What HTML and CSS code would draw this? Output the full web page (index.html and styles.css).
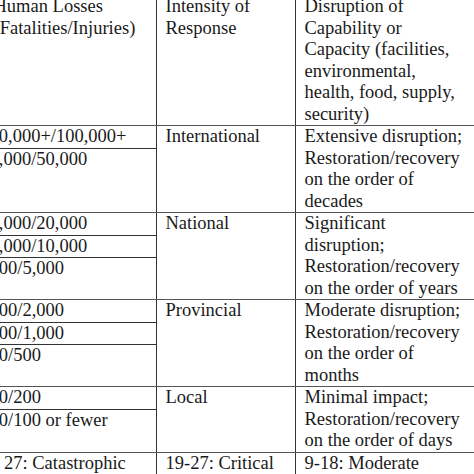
FILE: index.html
```html
<!DOCTYPE html>
<html>
<head>
<meta charset="utf-8">
<link rel="stylesheet" href="styles.css">
</head>
<body>
<div class="table">
  <div class="row">
    <div class="cell">Human Losses (Fatalities/Injuries)</div>
    <div class="cell">Intensity of Response</div>
    <div class="cell last">Disruption of Capability or Capacity (facilities, environmental, health, food, supply, security)</div>
  </div>
  <div class="row">
    <div class="cell stack">
      <div class="sub">10,000+/100,000+</div>
      <div class="sub grow">5,000/50,000</div>
    </div>
    <div class="cell">International</div>
    <div class="cell last">Extensive disruption; Restoration/recovery on the order of decades</div>
  </div>
  <div class="row">
    <div class="cell stack">
      <div class="sub">2,000/20,000</div>
      <div class="sub">1,000/10,000</div>
      <div class="sub grow">500/5,000</div>
    </div>
    <div class="cell">National</div>
    <div class="cell last">Significant disruption; Restoration/recovery on the order of years</div>
  </div>
  <div class="row">
    <div class="cell stack">
      <div class="sub">200/2,000</div>
      <div class="sub">100/1,000</div>
      <div class="sub grow">50/500</div>
    </div>
    <div class="cell">Provincial</div>
    <div class="cell last">Moderate disruption; Restoration/recovery on the order of months</div>
  </div>
  <div class="row">
    <div class="cell stack">
      <div class="sub">20/200</div>
      <div class="sub grow">10/100 or fewer</div>
    </div>
    <div class="cell">Local</div>
    <div class="cell last">Minimal impact; Restoration/recovery on the order of days</div>
  </div>
  <div class="row">
    <div class="cell score">27: Catastrophic</div>
    <div class="cell">19-27: Critical</div>
    <div class="cell last">9-18: Moderate</div>
  </div>
</div>
</body>
</html>
```

FILE: styles.css
```css
html, body {
  margin: 0;
  padding: 0;
  width: 474px;
  height: 474px;
  overflow: hidden;
  background: #ffffff;
}

.table {
  margin-top: -5px;
  margin-left: -16px;
  width: 492px;
  border-top: 1px solid #444;
  border-left: 1px solid #444;
  font-family: "Liberation Serif", "Times New Roman", serif;
  font-size: 18.5px;
  line-height: 21.5px;
  color: #1a1a1a;
}

.row {
  display: grid;
  grid-template-columns: 172px 139px 180px;
  border-bottom: 1px solid #555;
}

.cell {
  padding: 0 8.5px;
  border-right: 1px solid #333;
}

.cell.last {
  border-right: none;
}

.cell.stack {
  padding: 0;
  display: flex;
  flex-direction: column;
}

.sub {
  padding: 0 8.5px 0 4.5px;
  border-bottom: 1px solid #333;
}

.sub.grow {
  flex: 1;
  border-bottom: none;
}

.cell.score {
  padding-left: 19px;
}
```
